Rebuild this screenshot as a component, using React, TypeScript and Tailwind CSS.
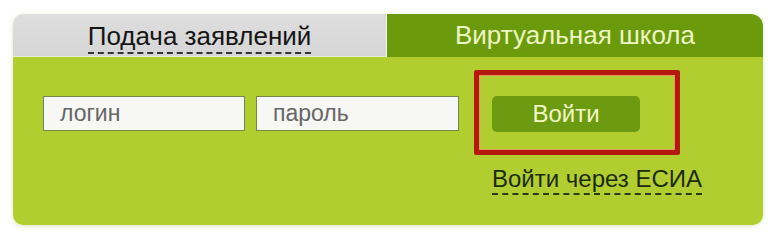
import { useState } from "react";

export default function App() {
  const [login, setLogin] = useState("");
  const [password, setPassword] = useState("");

  return (
    <div className="w-[774px] h-[234px] bg-white pt-[14px] pl-[13px] font-['Liberation_Sans',Arial,sans-serif]">
      <div className="w-[750px] shadow-[0_1px_4px_rgba(200,210,150,0.6)] rounded-[10px]">
        {/* вкладки */}
        <div className="flex h-[43px]">
          <div className="w-[373px] bg-gradient-to-b from-[#dedede] to-[#d6d6d6] rounded-tl-[10px] flex items-center justify-center border-b border-[#e9eedb]">
            <span className="text-[26px] leading-none text-[#151515] pb-[3px] border-b-2 border-dashed border-[#333] mt-[6px]">
              Подача заявлений
            </span>
          </div>
          <div className="w-px bg-[#f2f2f2]" />
          <div className="flex-1 bg-[#6b9b0c] rounded-tr-[12px] flex items-center justify-center">
            <span className="text-[26px] leading-none text-[#eef5c4] mb-[2px]">Виртуальная школа</span>
          </div>
        </div>

        {/* форма входа */}
        <div className="h-[168px] bg-[#b1cd30] rounded-b-[10px] pl-[30px] pt-[13px] flex gap-[15px]">
          <div className="flex gap-[11px] mt-[26px] h-[35px]">
            <input
              value={login}
              onChange={(e) => setLogin(e.target.value)}
              placeholder="логин"
              className="w-[202px] h-[35px] bg-[#f7f7f5] border border-[#75854c] pl-[16px] text-[23px] text-[#333] placeholder:text-[#666] outline-none"
            />
            <input
              type="password"
              value={password}
              onChange={(e) => setPassword(e.target.value)}
              placeholder="пароль"
              className="w-[203px] h-[35px] bg-[#f7f7f5] border border-[#75854c] pl-[16px] text-[23px] text-[#333] placeholder:text-[#666] outline-none"
            />
          </div>

          <div className="flex flex-col">
            <div className="w-[206px] h-[85px] border-[5px] border-[#b5180c] rounded-[2px] pl-[13px] pt-[21px] shadow-[inset_0_0_0_1px_#e49a5c]">
              <button className="w-[148px] h-[36px] bg-[#6c9a10] rounded-[5px] text-[24px] leading-none text-[#f2f7c4]">
                Войти
              </button>
            </div>
            <div className="ml-[18px] mt-[12px]">
              <span className="text-[24px] leading-none text-[#1c2b0e] pb-[1px] border-b-2 border-dashed border-[#2b3a18]">
                Войти через ЕСИА
              </span>
            </div>
          </div>
        </div>
      </div>
    </div>
  );
}
